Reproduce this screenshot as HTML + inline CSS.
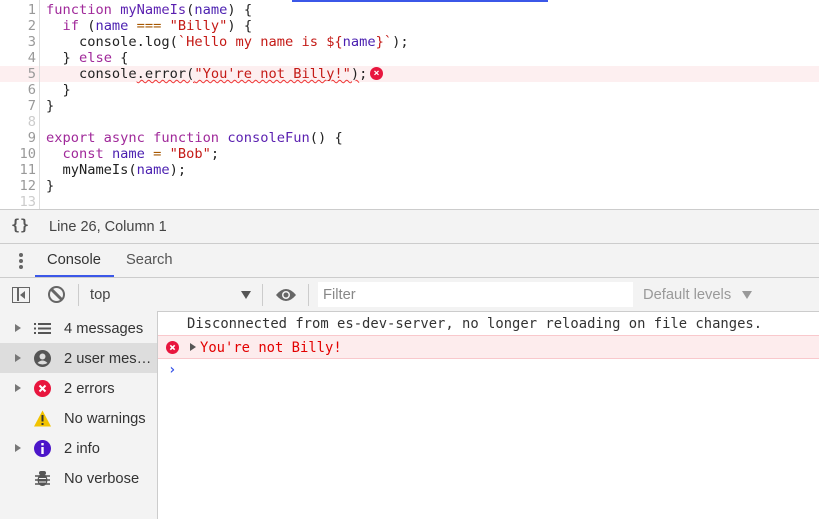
<!DOCTYPE html>
<html><head><meta charset="utf-8"><style>
*{margin:0;padding:0;box-sizing:border-box}
body{width:819px;height:519px;overflow:hidden;background:#fff;font-family:"Liberation Sans","DejaVu Sans",sans-serif;position:relative}
.code{position:absolute;left:0;top:0;width:819px;height:209px;font:13.7px "DejaVu Sans Mono",monospace}
.gut{position:absolute;left:0;top:0;width:40px;height:209px;border-right:1px solid #ddd}
.ln{position:absolute;left:0;width:36px;text-align:right;color:#999;height:16px;line-height:16px}
.cl{position:absolute;left:46px;height:16px;line-height:16px;white-space:pre;color:#222}
.k{color:#a0299a}.f{color:#5a1fb0}.v{color:#4a1fb0}.s{color:#c41a16}.o{color:#a65700}
.bar{position:absolute;left:0;width:819px;background:#f3f3f3;border-top:1px solid #ccc}
.side{position:absolute;left:0;top:311px;width:158px;height:208px;background:#f3f3f3;border-right:1px solid #ccc}
.it{position:absolute;left:0;width:157px;height:30px;font-size:14.7px;color:#333;line-height:32px}
.it .tri{position:absolute;left:15px;top:11px;border-left:6px solid #777;border-top:4px solid transparent;border-bottom:4px solid transparent}
.it span.t{position:absolute;left:64px}
.ic{position:absolute;left:34px;top:7px;width:17px;height:17px}
</style></head><body>
<div style="position:absolute;left:292px;top:0;width:256px;height:2px;background:#3b57e8"></div>
<div class="code">
<div style="position:absolute;left:0;top:66px;width:819px;height:16px;background:#fdeff0"></div>
<div class="gut"></div>
<div class="ln" style="top:2px">1</div><div class="ln" style="top:18px">2</div><div class="ln" style="top:34px">3</div><div class="ln" style="top:50px">4</div><div class="ln" style="top:66px">5</div><div class="ln" style="top:82px">6</div><div class="ln" style="top:98px">7</div><div class="ln" style="top:114px;color:#ccc">8</div><div class="ln" style="top:130px">9</div><div class="ln" style="top:146px">10</div><div class="ln" style="top:162px">11</div><div class="ln" style="top:178px">12</div><div class="ln" style="top:194px;color:#ccc">13</div>
<div class="cl" style="top:2px"><span class="k">function</span> <span class="f">myNameIs</span>(<span class="v">name</span>) {</div>
<div class="cl" style="top:18px">  <span class="k">if</span> (<span class="v">name</span> <span class="o">===</span> <span class="s">"Billy"</span>) {</div>
<div class="cl" style="top:34px">    console.log(<span class="s">`Hello my name is ${</span><span class="v">name</span><span class="s">}`</span>);</div>
<div class="cl" style="top:50px">  } <span class="k">else</span> {</div>
<div class="cl" style="top:66px">    console<span style="text-decoration:underline wavy #e33;text-decoration-thickness:1px">.error(<span class="s">"You're not Billy!"</span>)</span>;</div>
<div style="position:absolute;left:370px;top:67px;width:13px;height:13px;border-radius:50%;background:#e8163e;color:#fff;font-size:10px;line-height:13px;text-align:center;font-weight:bold">×</div>
<div class="cl" style="top:82px">  }</div>
<div class="cl" style="top:98px">}</div>
<div class="cl" style="top:130px"><span class="k">export async function</span> <span class="f">consoleFun</span>() {</div>
<div class="cl" style="top:146px">  <span class="k">const</span> <span class="v">name</span> <span class="o">=</span> <span class="s">"Bob"</span>;</div>
<div class="cl" style="top:162px">  myNameIs(<span class="v">name</span>);</div>
<div class="cl" style="top:178px">}</div>
</div>
<div class="bar" style="top:209px;height:35px">
<div style="position:absolute;left:11px;top:6px;font:bold 15px 'DejaVu Sans Mono',monospace;color:#555">{}</div>
<div style="position:absolute;left:49px;top:9px;font-size:14.5px;color:#444">Line 26, Column 1</div></div>
<div class="bar" style="top:243px;height:35px">
<div style="position:absolute;left:19px;top:9px;width:4px;height:4px;border-radius:2px;background:#666;box-shadow:0 6px 0 #666,0 12px 0 #666"></div>
<div style="position:absolute;left:47px;top:8px;font-size:14.7px;color:#333">Console</div>
<div style="position:absolute;left:35px;top:31px;width:79px;height:3px;background:#3b57e8"></div>
<div style="position:absolute;left:126px;top:8px;font-size:14.7px;color:#555">Search</div></div>
<div class="bar" style="top:277px;height:35px;border-bottom:1px solid #ccc">
<div style="position:absolute;left:12px;top:9px;width:18px;height:16px;border:1.5px solid #666"><div style="position:absolute;left:4px;top:0;width:1.5px;height:13px;background:#666"></div><div style="position:absolute;left:7px;top:3px;border-right:5px solid #666;border-top:4px solid transparent;border-bottom:4px solid transparent"></div></div>
<div style="position:absolute;left:48px;top:8px;width:17px;height:17px;border:2.5px solid #666;border-radius:50%"><div style="position:absolute;left:5px;top:-1px;width:2.5px;height:15px;background:#666;transform:rotate(-45deg)"></div></div>
<div style="position:absolute;left:78px;top:6px;width:1px;height:22px;background:#ccc"></div>
<div style="position:absolute;left:90px;top:9px;font-size:14.7px;color:#444">top</div>
<div style="position:absolute;left:241px;top:13px;border-top:8px solid #555;border-left:5px solid transparent;border-right:5px solid transparent"></div>
<div style="position:absolute;left:262px;top:6px;width:1px;height:22px;background:#ccc"></div>
<svg style="position:absolute;left:275px;top:9px" width="22" height="16" viewBox="0 0 22 16"><path d="M1 8Q11-4 21 8Q11 20 1 8Z" fill="#666"/><circle cx="11" cy="8" r="4" fill="#f3f3f3"/><circle cx="11" cy="8" r="2.5" fill="#666"/></svg>
<div style="position:absolute;left:308px;top:6px;width:1px;height:22px;background:#ccc"></div>
<div style="position:absolute;left:318px;top:4px;width:315px;height:25px;background:#fff;font-size:14.7px;color:#888;padding:5px 5px">Filter</div>
<div style="position:absolute;left:643px;top:9px;font-size:14.7px;color:#999">Default levels</div>
<div style="position:absolute;left:742px;top:13px;border-top:8px solid #999;border-left:5px solid transparent;border-right:5px solid transparent"></div></div>
<div class="side">
<div class="it" style="top:2px"><i class="tri"></i><svg class="ic" viewBox="0 0 17 17"><g fill="#555"><rect x="0" y="3" width="2" height="2"/><rect x="0" y="7.5" width="2" height="2"/><rect x="0" y="12" width="2" height="2"/><rect x="4" y="3" width="13" height="2"/><rect x="4" y="7.5" width="13" height="2"/><rect x="4" y="12" width="13" height="2"/></g></svg><span class="t">4 messages</span></div>
<div class="it" style="top:32px;background:#ddd"><i class="tri"></i><svg class="ic" viewBox="0 0 17 17"><circle cx="8.5" cy="8.5" r="8.5" fill="#555"/><circle cx="8.5" cy="6.5" r="3" fill="#ddd"/><path d="M3.5 13Q8.5 8 13.5 13Q8.5 16 3.5 13Z" fill="#ddd"/></svg><span class="t">2 user mes…</span></div>
<div class="it" style="top:62px"><i class="tri"></i><svg class="ic" viewBox="0 0 17 17"><circle cx="8.5" cy="8.5" r="8.5" fill="#e8163e"/><path d="M5.5 5.5L11.5 11.5M11.5 5.5L5.5 11.5" stroke="#fff" stroke-width="2"/></svg><span class="t">2 errors</span></div>
<div class="it" style="top:92px"><svg class="ic" viewBox="0 0 17 17"><path d="M8.5 0.5L17 16.5H0Z" fill="#f2c300"/><rect x="7.5" y="5" width="2" height="6.5" fill="#333"/><rect x="7.5" y="13" width="2" height="2" fill="#333"/></svg><span class="t">No warnings</span></div>
<div class="it" style="top:122px"><i class="tri"></i><svg class="ic" viewBox="0 0 17 17"><circle cx="8.5" cy="8.5" r="8.5" fill="#4c16c9"/><rect x="7.3" y="3" width="2.4" height="2.4" fill="#fff"/><rect x="7.3" y="7" width="2.4" height="7" fill="#fff"/></svg><span class="t">2 info</span></div>
<div class="it" style="top:152px"><svg class="ic" viewBox="0 0 17 17"><ellipse cx="8.5" cy="10" rx="5" ry="6" fill="#555"/><rect x="5" y="1" width="7" height="4" rx="2" fill="#555"/><path d="M1 6h15M1 10h15M1 14h15" stroke="#555" stroke-width="1.5"/><path d="M5 8.5h7M5 12h7" stroke="#f3f3f3" stroke-width="1"/></svg><span class="t">No verbose</span></div>
</div>
<div style="position:absolute;left:187px;top:316px;font:13.85px 'DejaVu Sans Mono',monospace;color:#333">Disconnected from es-dev-server, no longer reloading on file changes.</div>
<div style="position:absolute;left:158px;top:335px;width:661px;height:24px;background:#fdeced;border-top:1px solid #f9c8cc;border-bottom:1px solid #f9c8cc">
<svg style="position:absolute;left:8px;top:5px" width="13" height="13" viewBox="0 0 13 13"><circle cx="6.5" cy="6.5" r="6.5" fill="#e8163e"/><path d="M4.3 4.3L8.7 8.7M8.7 4.3L4.3 8.7" stroke="#fff" stroke-width="1.6"/></svg>
<div style="position:absolute;left:32px;top:7px;border-left:6px solid #555;border-top:4px solid transparent;border-bottom:4px solid transparent"></div>
<div style="position:absolute;left:42px;top:4px;font:13.85px 'DejaVu Sans Mono',monospace;color:#e30000">You're not Billy!</div></div>
<div style="position:absolute;left:168px;top:362px;font:bold 14px 'DejaVu Sans Mono',monospace;color:#3b57e8">›</div>
</body></html>
